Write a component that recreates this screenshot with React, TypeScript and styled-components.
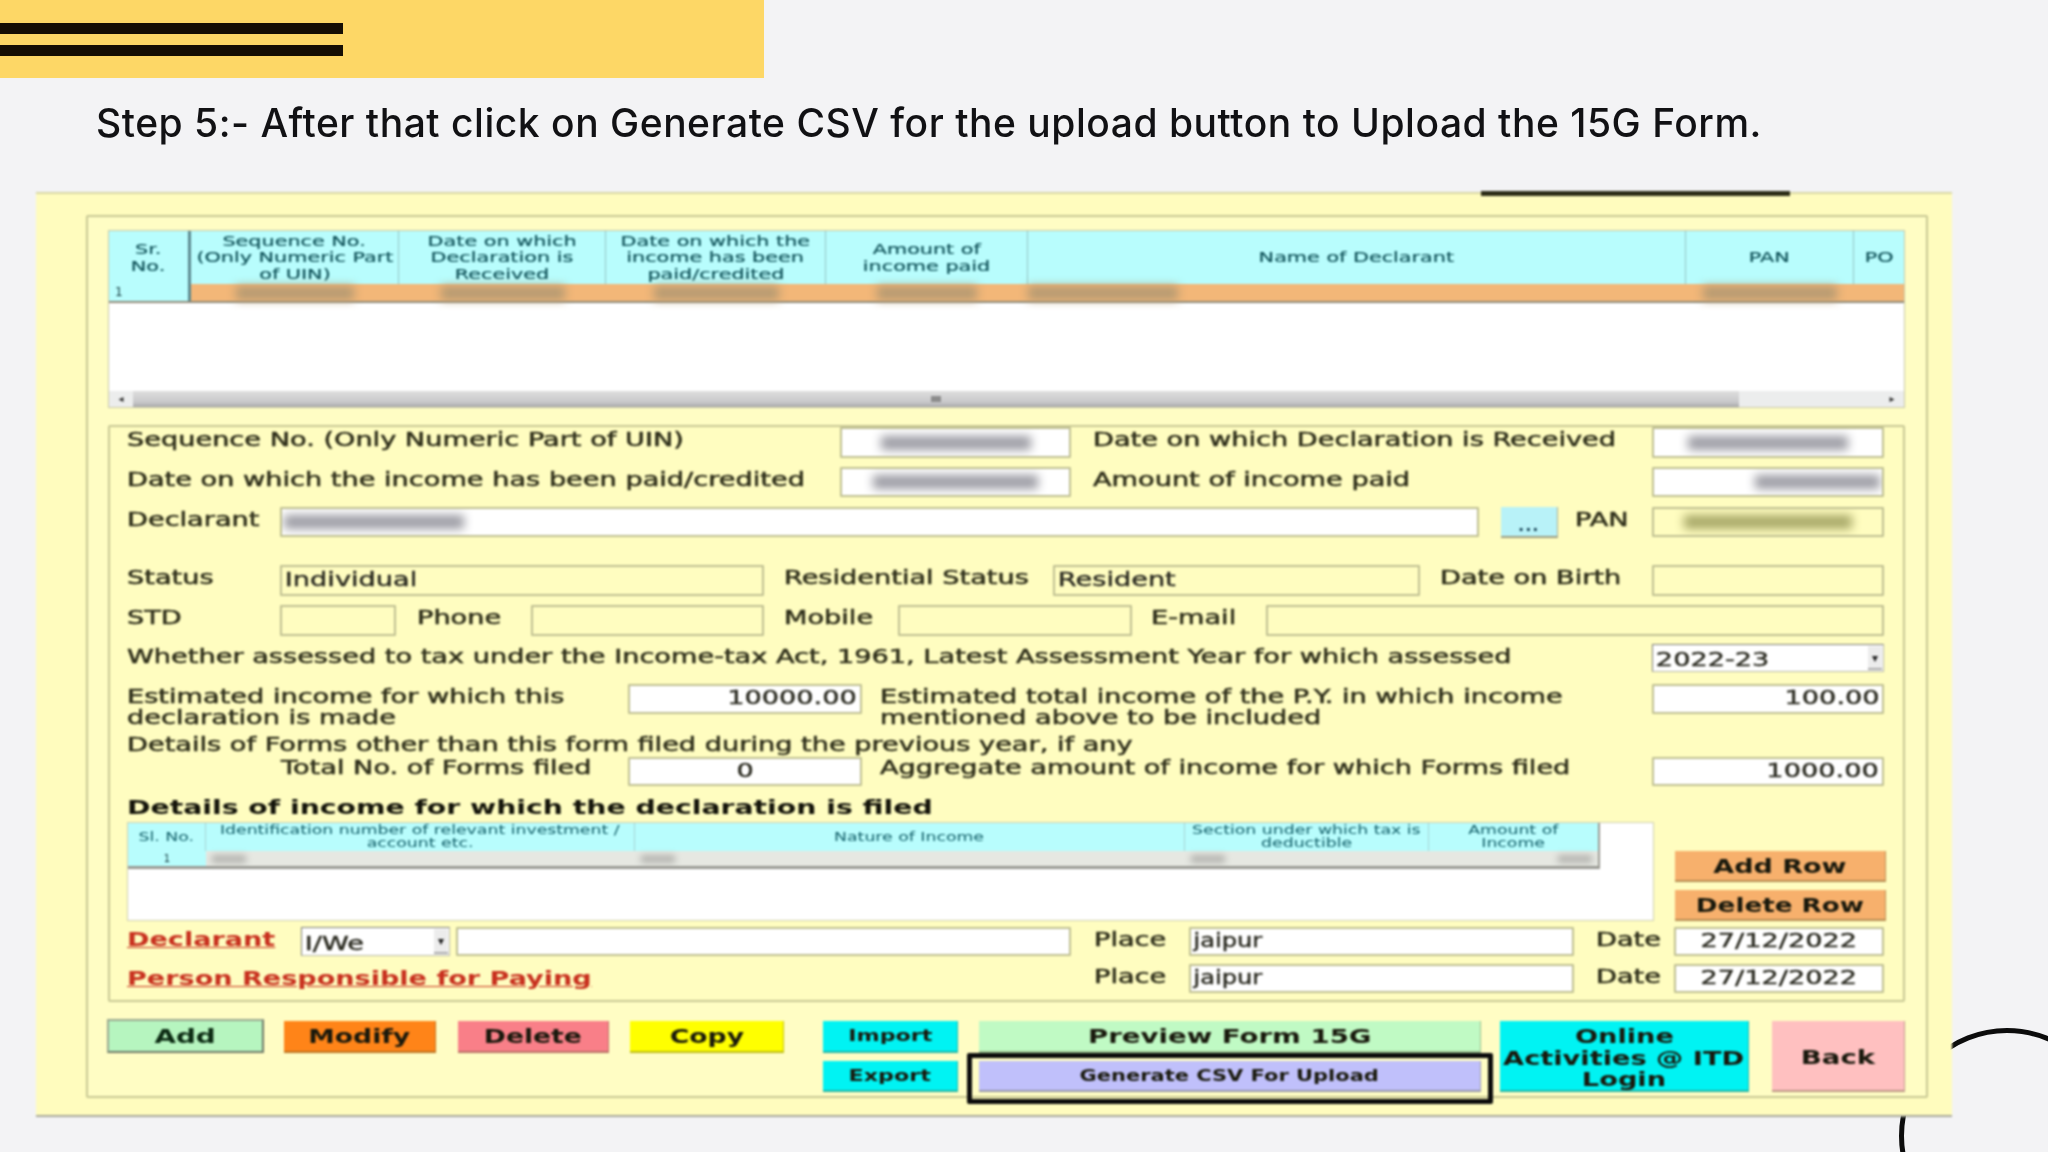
import styled, { createGlobalStyle } from "styled-components";

const FORM_FONT = `"DejaVu Sans", "Liberation Sans", sans-serif`;
const LABEL_STRETCH = 1.43;
const HEAD_STRETCH = 1.43;

const TABLE_COLS = "82px 208px 207px 220px 202px 658px 168px 1fr";
const SUB_COLS = "78px 429px 550px 244px 1fr";

export default function App() {
  return (
    <Page>
      <GlobalStyle />
      <Circle />
      <Banner>
        <Bar />
        <Bar />
      </Banner>
      <Heading>
        Step 5:- After that click on Generate CSV for the upload button to Upload the 15G Form.
      </Heading>
      <Card>
        <TopMark />
        <Frame>
          <DataTable>
            <HeadRow $cols={TABLE_COLS}>
              <HeadCell><span>Sr.</span><span>No.</span></HeadCell>
              <HeadCell><span>Sequence No.</span><span>(Only Numeric Part</span><span>of UIN)</span></HeadCell>
              <HeadCell><span>Date on which</span><span>Declaration is</span><span>Received</span></HeadCell>
              <HeadCell><span>Date on which the</span><span>income has been</span><span>paid/credited</span></HeadCell>
              <HeadCell><span>Amount of</span><span>income paid</span></HeadCell>
              <HeadCell><span>Name of Declarant</span></HeadCell>
              <HeadCell><span>PAN</span></HeadCell>
              <HeadCell><span>PO</span></HeadCell>
            </HeadRow>
            <DataRow $cols={TABLE_COLS}>
              <IndexCell>1</IndexCell>
              <DataCell><RowBlur $w={118} /></DataCell>
              <DataCell><RowBlur $w={124} /></DataCell>
              <DataCell><RowBlur $w={125} /></DataCell>
              <DataCell><RowBlur $w={100} /></DataCell>
              <DataCell $left><RowBlur $w={150} /></DataCell>
              <DataCell><RowBlur $w={134} /></DataCell>
              <DataCell />
            </DataRow>
            <TableBody />
            <ScrollBar>
              <Arrow>◂</Arrow>
              <Thumb><Grip /></Thumb>
              <Arrow>▸</Arrow>
            </ScrollBar>
          </DataTable>

          <Section>
            <Row $h={31}>
              <Label $w={713}><span>Sequence No. (Only Numeric Part of UIN)</span></Label>
              <Field $w={231} $white $align="center"><FieldBlur $w={150} /></Field>
              <Label $w={581} $pad={22}><span>Date on which Declaration is Received</span></Label>
              <Field $w={232} $white $align="center"><FieldBlur $w={160} /></Field>
            </Row>
            <Row $h={30} $mt={9}>
              <Label $w={713}><span>Date on which the income has been paid/credited</span></Label>
              <Field $w={231} $white $align="center"><FieldBlur $w={165} /></Field>
              <Label $w={581} $pad={22}><span>Amount of income paid</span></Label>
              <Field $w={232} $white $align="flex-end"><FieldBlur $w={125} /></Field>
            </Row>
            <Row $h={30} $mt={10}>
              <Label $w={153}><span>Declarant</span></Label>
              <Field $w={1199} $white><FieldBlur $w={180} /></Field>
              <DotsButton>...</DotsButton>
              <Label $w={94} $pad={17}><span>PAN</span></Label>
              <Field $w={232} $align="center"><FieldBlur $w={168} $olive /></Field>
            </Row>
            <Row $h={31} $mt={28}>
              <Label $w={153}><span>Status</span></Label>
              <Field $w={484}><FieldText>Individual</FieldText></Field>
              <Label $w={289} $pad={20}><span>Residential Status</span></Label>
              <Field $w={367}><FieldText>Resident</FieldText></Field>
              <Label $w={232} $pad={20}><span>Date on Birth</span></Label>
              <Field $w={232} />
            </Row>
            <Row $h={31} $mt={9}>
              <Label $w={153}><span>STD</span></Label>
              <Field $w={116} />
              <Label $w={135} $pad={21}><span>Phone</span></Label>
              <Field $w={233} />
              <Label $w={134} $pad={20}><span>Mobile</span></Label>
              <Field $w={234} />
              <Label $w={134} $pad={19}><span>E-mail</span></Label>
              <Field $w={618} />
            </Row>
            <Row $h={28} $mt={8}>
              <Label $w={1525}><span>Whether assessed to tax under the Income-tax Act, 1961, Latest Assessment Year for which assessed</span></Label>
              <Select $w={232}>
                <FieldText>2022-23</FieldText>
                <SelectArrow>▾</SelectArrow>
              </Select>
            </Row>
            <Row $h={30} $mt={12}>
              <Label $w={501}><span>Estimated income for which this</span><span>declaration is made</span></Label>
              <Field $w={234} $white $align="flex-end"><FieldText $right>10000.00</FieldText></Field>
              <Label $w={790} $pad={18}><span>Estimated total income of the P.Y. in which income</span><span>mentioned above to be included</span></Label>
              <Field $w={232} $white $align="flex-end"><FieldText $right>100.00</FieldText></Field>
            </Row>
            <Row $h={25} $mt={18}>
              <Label $w={1500}><span>Details of Forms other than this form filed during the previous year, if any</span></Label>
            </Row>
            <Row $h={29}>
              <Label $w={501} $pad={154} $tight><span>Total No. of Forms filed</span></Label>
              <Field $w={234} $white $align="center"><FieldText $center>0</FieldText></Field>
              <Label $w={790} $pad={18} $tight><span>Aggregate amount of income for which Forms filed</span></Label>
              <Field $w={232} $white $align="flex-end"><FieldText $right>1000.00</FieldText></Field>
            </Row>
            <Row $h={24} $mt={9}>
              <SectionTitle><span>Details of income for which the declaration is filed</span></SectionTitle>
            </Row>
            <Row $h={99} $mt={3}>
              <SubTable>
                <SubInner>
                  <SubHead $cols={SUB_COLS}>
                    <SubHeadCell><span>Sl. No.</span></SubHeadCell>
                    <SubHeadCell><span>Identification number of relevant investment /</span><span>account etc.</span></SubHeadCell>
                    <SubHeadCell><span>Nature of Income</span></SubHeadCell>
                    <SubHeadCell><span>Section under which tax is</span><span>deductible</span></SubHeadCell>
                    <SubHeadCell><span>Amount of</span><span>Income</span></SubHeadCell>
                  </SubHead>
                  <SubRow $cols={SUB_COLS}>
                    <SubIndex>1</SubIndex>
                    <SubCell><SubBlur /></SubCell>
                    <SubCell><SubBlur /></SubCell>
                    <SubCell><SubBlur /></SubCell>
                    <SubCell $end><SubBlur /></SubCell>
                  </SubRow>
                </SubInner>
              </SubTable>
              <SideButtons>
                <Button $w={211} $h={31} $bg="#f7b06c" $fs={19} $sx={1.42}><span>Add Row</span></Button>
                <Button $w={211} $h={31} $bg="#f7b06c" $fs={19} $sx={1.38}><span>Delete Row</span></Button>
              </SideButtons>
            </Row>
            <Row $h={29} $mt={6}>
              <RedLink $w={174}><span>Declarant</span></RedLink>
              <Select $w={149}>
                <FieldText>I/We</FieldText>
                <SelectArrow>▾</SelectArrow>
              </Select>
              <Field $w={615} $ml={6} $white />
              <Label $w={118} $pad={23}><span>Place</span></Label>
              <Field $w={385} $white><FieldText $sx={1.27}>jaipur</FieldText></Field>
              <Label $w={100} $pad={22}><span>Date</span></Label>
              <Field $w={210} $white $align="center"><FieldText $center>27/12/2022</FieldText></Field>
            </Row>
            <Row $h={29} $mt={8}>
              <RedLink $w={962} $low><span>Person Responsible for Paying</span></RedLink>
              <Label $w={100} $pad={5}><span>Place</span></Label>
              <Field $w={385} $white><FieldText $sx={1.27}>jaipur</FieldText></Field>
              <Label $w={100} $pad={22}><span>Date</span></Label>
              <Field $w={210} $white $align="center"><FieldText $center>27/12/2022</FieldText></Field>
            </Row>
          </Section>

          <Toolbar>
            <AddButton><span>Add</span></AddButton>
            <Button $w={152} $h={32} $ml={20} $mt={2} $bg="#ff8418"><span>Modify</span></Button>
            <Button $w={151} $h={32} $ml={22} $mt={2} $bg="#f97f88"><span>Delete</span></Button>
            <Button $w={154} $h={32} $ml={21} $mt={2} $bg="#ffff00"><span>Copy</span></Button>
            <ButtonStack $w={135} $ml={39}>
              <Button $w={135} $h={32} $bg="#00f3f3" $fs={16} $sx={1.39}><span>Import</span></Button>
              <Button $w={135} $h={31} $bg="#00f3f3" $fs={16} $sx={1.39}><span>Export</span></Button>
            </ButtonStack>
            <ButtonStack $w={502} $ml={21}>
              <Button $w={502} $h={32} $bg="#c0fac4" $sx={1.38}><span>Preview Form 15G</span></Button>
              <Highlighted>
                <Button $w={502} $h={31} $bg="#c0c0fb" $fs={16} $sx={1.31}><span>Generate CSV For Upload</span></Button>
                <HighlightBox />
              </Highlighted>
            </ButtonStack>
            <Button $w={249} $h={71} $ml={19} $mt={2} $bg="#00f3f3" $lh={21.5} $pt={6} $sx={1.36}>
              <span>Online</span>
              <span>Activities @ ITD</span>
              <span>Login</span>
            </Button>
            <Button $w={133} $h={71} $ml={23} $mt={2} $bg="#ffc0c0" $pt={2} $sx={1.38}><span>Back</span></Button>
          </Toolbar>
        </Frame>
      </Card>
    </Page>
  );
}

const GlobalStyle = createGlobalStyle`
  html, body {
    margin: 0;
    background: #f3f3f5;
  }
  * {
    box-sizing: border-box;
  }
`;

const Page = styled.div`
  position: relative;
  width: 2048px;
  height: 1152px;
  overflow: hidden;
  background: #f3f3f5;
`;

const Circle = styled.div`
  position: absolute;
  left: 1899px;
  top: 1028px;
  width: 216px;
  height: 216px;
  border: 5px solid #0c0c0c;
  border-radius: 50%;
  filter: blur(0.5px);
`;

const Banner = styled.div`
  display: flex;
  flex-direction: column;
  gap: 11px;
  width: 764px;
  height: 78px;
  padding-top: 23px;
  background: #fdd766;
`;

const Bar = styled.div`
  width: 343px;
  height: 11px;
  background: #150e04;
`;

const Heading = styled.h1`
  position: relative;
  margin: 0;
  padding: 22px 0 46px 96px;
  font: 500 39px/46px Inter, "Liberation Sans", sans-serif;
  letter-spacing: 0.52px;
  color: #111114;
  white-space: nowrap;
  filter: blur(0.4px);
`;

const Card = styled.section`
  position: relative;
  width: 1916px;
  height: 925px;
  margin-left: 36px;
  padding: 21px 0 0 50px;
  background: #fffcbe;
  border-top: 2px solid #d9d8a4;
  border-bottom: 2px solid #a9a99a;
  font-family: ${FORM_FONT};
  filter: blur(0.9px);
`;

const TopMark = styled.div`
  position: absolute;
  left: 1445px;
  top: -3px;
  width: 309px;
  height: 5px;
  background: #2c2c16;
`;

const Frame = styled.div`
  width: 1842px;
  height: 883px;
  padding: 13px 20px 0 20px;
  background: #fffdc4;
  border: 2px solid #c8c894;
  border-radius: 2px;
`;

const DataTable = styled.div`
  display: flex;
  flex-direction: column;
  width: 1797px;
  height: 178px;
  background: #fff;
  border: 1px solid #c9c9a8;
`;

const HeadRow = styled.div<{ $cols: string }>`
  display: grid;
  grid-template-columns: ${(p) => p.$cols};
  height: 53px;
  background: #b8fdfd;
`;

const HeadCell = styled.div`
  display: flex;
  flex-direction: column;
  align-items: center;
  justify-content: center;
  border-right: 1px solid #94c4c4;
  font-size: 14.5px;
  line-height: 16.5px;
  color: #0f5158;
  -webkit-text-stroke: 0.2px #0f5158;
  white-space: nowrap;

  &:first-child {
    border-right: 3px solid #5c8a90;
  }
  &:last-child {
    border-right: 0;
  }

  span {
    display: block;
    transform: scaleX(${HEAD_STRETCH});
  }
`;

const DataRow = styled.div<{ $cols: string }>`
  display: grid;
  grid-template-columns: ${(p) => p.$cols};
  height: 19px;
  background: #f3b778;
  border-bottom: 2px solid #8f8a78;
`;

const IndexCell = styled.div`
  padding-left: 6px;
  background: #b8fdfd;
  border-right: 3px solid #5c8a90;
  font-size: 12px;
  line-height: 17px;
  color: #10353a;
`;

const DataCell = styled.div<{ $left?: boolean }>`
  display: flex;
  align-items: center;
  justify-content: ${(p) => (p.$left ? "flex-start" : "center")};
`;

const RowBlur = styled.div<{ $w: number }>`
  width: ${(p) => p.$w}px;
  height: 14px;
  background: #b59a72;
  filter: blur(5px);
`;

const TableBody = styled.div`
  flex: 1;
  background: #fff;
`;

const ScrollBar = styled.div`
  display: flex;
  align-items: center;
  height: 16px;
  background: #eceded;
`;

const Arrow = styled.div`
  width: 24px;
  font-size: 10px;
  line-height: 16px;
  text-align: center;
  color: #333;
`;

const Thumb = styled.div`
  display: flex;
  align-items: center;
  justify-content: center;
  flex: 0 0 1606px;
  height: 100%;
  background: linear-gradient(#dedede, #c8c8ca 70%, #a8a8aa);
  margin-right: auto;
`;

const Grip = styled.div`
  width: 10px;
  height: 6px;
  background: #8c8c8c;
`;

const Section = styled.div`
  width: 1797px;
  height: 577px;
  margin-top: 17px;
  padding-left: 17px;
  background: #fffdc0;
  border: 2px solid #c8c894;
  border-radius: 2px;
`;

const Row = styled.div<{ $h: number; $mt?: number }>`
  display: flex;
  align-items: flex-start;
  height: ${(p) => p.$h}px;
  margin-top: ${(p) => p.$mt ?? 0}px;
`;

const Label = styled.div<{ $w: number; $pad?: number; $tight?: boolean }>`
  flex: none;
  width: ${(p) => p.$w}px;
  padding-left: ${(p) => p.$pad ?? 0}px;
  padding-top: ${(p) => (p.$tight ? 0 : 2)}px;
  font-size: 19px;
  line-height: 21px;
  color: #2f2f1a;
  -webkit-text-stroke: 0.5px #2f2f1a;
  white-space: nowrap;

  span {
    display: block;
    width: max-content;
    transform: scaleX(${LABEL_STRETCH});
    transform-origin: left center;
  }
`;

const SectionTitle = styled.div`
  font-size: 19px;
  font-weight: 700;
  line-height: 24px;
  color: #14140a;
  white-space: nowrap;

  span {
    display: block;
    width: max-content;
    transform: scaleX(1.489);
    transform-origin: left center;
  }
`;

const RedLink = styled(Label)<{ $low?: boolean }>`
  padding-top: ${(p) => (p.$low ? 3 : 1)}px;
  font-weight: 700;
  line-height: 22px;
  color: #c8301e;
  -webkit-text-stroke: 0;
  text-decoration: underline;

  span {
    transform: scaleX(1.425);
  }
`;

const Field = styled.div<{ $w: number; $white?: boolean; $align?: string; $ml?: number }>`
  display: flex;
  flex: none;
  align-items: center;
  justify-content: ${(p) => p.$align ?? "flex-start"};
  width: ${(p) => p.$w}px;
  height: 100%;
  margin-left: ${(p) => p.$ml ?? 0}px;
  overflow: hidden;
  background: ${(p) => (p.$white ? "#fff" : "transparent")};
  border: 2px solid #c0c092;
  border-radius: 1px;
`;

const FieldText = styled.span<{ $right?: boolean; $center?: boolean; $sx?: number }>`
  display: block;
  padding: 0 2px 4px;
  font-size: 19px;
  line-height: 22px;
  color: #2a2a20;
  -webkit-text-stroke: 0.4px #2a2a20;
  white-space: nowrap;
  transform: scaleX(${(p) => p.$sx ?? 1.43});
  transform-origin: ${(p) => (p.$right ? "right" : p.$center ? "center" : "left")} center;
`;

const FieldBlur = styled.div<{ $w: number; $olive?: boolean }>`
  width: ${(p) => p.$w}px;
  height: 14px;
  margin: 0 2px;
  background: ${(p) => (p.$olive ? "#a8a868" : "#9c9ca4")};
  filter: blur(5px);
`;

const Select = styled.div<{ $w: number }>`
  position: relative;
  display: flex;
  flex: none;
  align-items: center;
  width: ${(p) => p.$w}px;
  height: 100%;
  background: #fff;
  border: 1px solid #b8b8a8;
  border-top-color: #7c7c78;
  border-left-color: #7c7c78;

  ${FieldText} {
    padding: 2px 2px 0;
  }
`;

const SelectArrow = styled.div`
  position: absolute;
  right: 1px;
  top: 1px;
  bottom: 1px;
  width: 14px;
  font-size: 12px;
  line-height: 24px;
  text-align: center;
  color: #222;
  background: #ececec;
  border-bottom: 2px solid #aaa;
`;

const DotsButton = styled.div`
  flex: none;
  width: 57px;
  height: 31px;
  margin-left: 22px;
  padding-top: 8px;
  background: #b8f2f8;
  border-bottom: 2px solid #9c9c80;
  border-right: 1px solid #b0b090;
  font-size: 15px;
  font-weight: 700;
  line-height: 22px;
  letter-spacing: 1.5px;
  text-align: center;
  color: #123c50;
`;

const SubTable = styled.div`
  flex: none;
  width: 1527px;
  height: 100%;
  background: #fff;
  border: 1px solid #d0d0b0;
`;

const SubInner = styled.div`
  width: 1472px;
  border-right: 2px solid #9a9a92;
`;

const SubHead = styled.div<{ $cols: string }>`
  display: grid;
  grid-template-columns: ${(p) => p.$cols};
  height: 28px;
  background: #b8fdfd;
`;

const SubHeadCell = styled.div`
  display: flex;
  flex-direction: column;
  align-items: center;
  justify-content: center;
  border-right: 1px solid #a6d4d4;
  font-size: 12px;
  line-height: 13px;
  color: #14606a;
  white-space: nowrap;

  &:last-child {
    border-right: 0;
  }

  span {
    display: block;
    transform: scaleX(1.44);
  }
`;

const SubRow = styled.div<{ $cols: string }>`
  display: grid;
  grid-template-columns: ${(p) => p.$cols};
  height: 18px;
  background: #e6e8e2;
  border-bottom: 3px solid #999a94;
`;

const SubIndex = styled.div`
  background: #b8fdfd;
  font-size: 10px;
  line-height: 15px;
  text-align: center;
  color: #10353a;
`;

const SubCell = styled.div<{ $end?: boolean }>`
  display: flex;
  align-items: center;
  justify-content: ${(p) => (p.$end ? "flex-end" : "flex-start")};
  padding: 0 6px;
`;

const SubBlur = styled.div`
  width: 34px;
  height: 8px;
  background: #b4b4b0;
  filter: blur(3px);
`;

const SideButtons = styled.div`
  display: flex;
  flex-direction: column;
  gap: 8px;
  margin-left: 21px;
  padding-top: 29px;
`;

type ButtonProps = {
  $w: number;
  $h: number;
  $bg: string;
  $ml?: number;
  $mt?: number;
  $fs?: number;
  $lh?: number;
  $pt?: number;
  $sx?: number;
};

const Button = styled.div<ButtonProps>`
  display: flex;
  flex: none;
  flex-direction: column;
  align-items: center;
  justify-content: center;
  width: ${(p) => p.$w}px;
  height: ${(p) => p.$h}px;
  margin-left: ${(p) => p.$ml ?? 0}px;
  margin-top: ${(p) => p.$mt ?? 0}px;
  padding-top: ${(p) => p.$pt ?? 0}px;
  background: ${(p) => p.$bg};
  border-right: 1px solid rgba(90, 90, 50, 0.35);
  border-bottom: 2px solid rgba(90, 90, 50, 0.4);
  font-size: ${(p) => p.$fs ?? 20}px;
  font-weight: 700;
  line-height: ${(p) => p.$lh ?? 22}px;
  color: #18180c;
  white-space: nowrap;

  span {
    display: block;
    transform: scaleX(${(p) => p.$sx ?? 1.33});
  }
`;

const AddButton = styled.div`
  display: flex;
  flex: none;
  align-items: center;
  justify-content: center;
  width: 157px;
  height: 34px;
  background: #b6f5bf;
  border: 2px solid #6f7a68;
  border-top-color: #9aa890;
  border-left-color: #9aa890;
  font-size: 20px;
  font-weight: 700;
  color: #0b2a12;

  span {
    display: block;
    transform: scaleX(1.39);
  }
`;

const Toolbar = styled.div`
  display: flex;
  align-items: flex-start;
  margin-top: 17px;
  margin-left: -1px;
`;

const ButtonStack = styled.div<{ $w: number; $ml: number }>`
  display: flex;
  flex: none;
  flex-direction: column;
  gap: 8px;
  width: ${(p) => p.$w}px;
  margin-left: ${(p) => p.$ml}px;
  margin-top: 2px;
`;

const Highlighted = styled.div`
  position: relative;
`;

const HighlightBox = styled.div`
  position: absolute;
  inset: -8px -12px -12px -12px;
  border: 5px solid #0b0b0b;
  border-radius: 2px;
`;
